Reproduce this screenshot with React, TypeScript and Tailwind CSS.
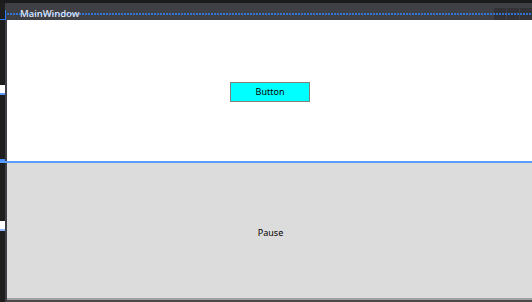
export default function App() {
  return (
    <div className="w-[532px] h-[302px] bg-[#1e1e1e] flex flex-col overflow-hidden font-['Noto_Sans',sans-serif]">
      <div className="h-[3px] shrink-0 bg-[#1b1b1c]" />
      <div className="flex flex-1 min-h-0">
        {/* left gutter with designer markers */}
        <div className="w-[5px] shrink-0 flex flex-col">
          <div className="h-[17px] shrink-0 border-b border-[#2b7bff]" />
          <div className="h-[65px] shrink-0" />
          <div className="h-[10px] shrink-0 bg-white border-b-2 border-[#5b9bff]" />
          <div className="h-[66px] shrink-0 border-b-2 border-[#4a90ff]" />
          <div className="h-[60px] shrink-0" />
          <div className="h-[10px] shrink-0 bg-white border-b-2 border-[#8fb4ff]" />
          <div className="flex-1" />
        </div>
        <div className="w-[2px] shrink-0 bg-[#3f3f46] flex flex-col">
          <div className="h-[7px]" />
          <div className="h-[10px] w-[1px] bg-[#2b7bff]" />
        </div>
        {/* window */}
        <div className="flex-1 flex flex-col min-w-0">
          <div className="h-[17px] shrink-0 bg-[#3f3f46] relative flex items-start">
            <svg className="absolute left-0 top-[10px] w-full h-[2px]" preserveAspectRatio="none">
              <line x1="0" y1="1" x2="100%" y2="1" stroke="#2f86ff" strokeWidth="1.5" strokeDasharray="2 1" />
            </svg>
            <span className="relative ml-[13px] mt-[5px] text-[9.5px] leading-[12px] font-medium text-[#e4eaf4]">MainWindow</span>
            <div className="ml-auto mt-[5px] flex gap-[1px]">
              <div className="w-[12px] h-[12px] bg-[#333337]" />
              <div className="w-[12px] h-[12px] bg-[#333337]" />
              <div className="w-[12px] h-[12px] bg-[#333337]" />
            </div>
          </div>
          <div className="h-[141px] shrink-0 bg-white flex items-center justify-center">
            <button className="w-[80px] h-[20px] bg-[#00ffff] border border-[#808080] text-[9px] text-black mt-[3px] ml-[1px]">
              Button
            </button>
          </div>
          <div className="h-[2px] shrink-0 bg-[#5a9cff] -ml-[7px]" />
          <div className="flex-1 bg-[#dcdcdc] flex items-center justify-center pt-[4px]">
            <span className="text-[9px] text-black ml-[2px]">Pause</span>
          </div>
          <div className="h-[2px] shrink-0 bg-[#a0a0a0]" />
          <div className="h-[2px] shrink-0 bg-[#4a4a4a]" />
        </div>
      </div>
    </div>
  )
}
